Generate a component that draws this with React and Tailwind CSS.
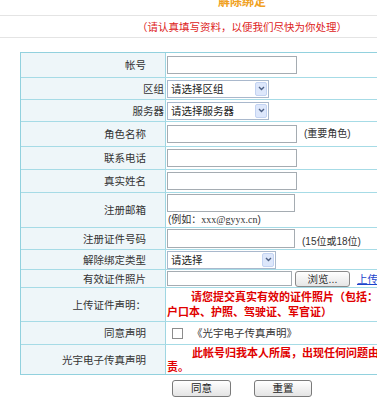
import React from "react";

const Label = ({ children, tight }) => (
  <div
    className={`w-[145px] shrink-0 bg-[#eef6f9] border-r border-[#9fd6e2] flex items-center justify-end text-[10.5px] leading-[14px] text-[#333] ${
      tight ? "pr-[1px]" : "pr-[19px]"
    }`}
  >
    {children}
  </div>
);

const Row = ({ h, label, tight, children, cellClass = "items-center" }) => (
  <div className={`flex border-b border-[#a6dbe6] last:border-b-0 ${h}`}>
    <Label tight={tight}>{label}</Label>
    <div className={`flex-1 flex pl-[1px] bg-white ${cellClass}`}>{children}</div>
  </div>
);

const Input = ({ w = "w-[130px]", h = "h-[18px]" }) => (
  <div className={`${w} ${h} shrink-0 bg-white border border-[#a5acb2]`} />
);

const Select = ({ text, w }) => (
  <div className={`${w} h-[18px] shrink-0 flex items-center justify-between border border-[#a9b8cc] bg-white pl-[3px] pr-[1px]`}>
    <span className="text-[10.5px] leading-[14px] text-[#222]">{text}</span>
    <span className="w-[12px] h-[14px] flex items-center justify-center bg-[#dde7fb] border border-[#c3d3f2] rounded-[2px]">
      <svg width="7" height="5" viewBox="0 0 7 5">
        <path d="M1 1l2.5 2.5L6 1" fill="none" stroke="#4d6185" strokeWidth="1.4" />
      </svg>
    </span>
  </div>
);

const Btn = ({ children, w }) => (
  <div className={`${w} h-[17px] border border-[#7a7a7a] rounded-[3px] bg-gradient-to-b from-white to-[#e4e4e4] flex items-start justify-center text-[10.5px] leading-[14px] text-[#222]`}>
    {children}
  </div>
);

export default function App() {
  return (
    <div className="w-[377px] h-[413px] overflow-hidden bg-white font-['Liberation_Sans','Noto_Sans_CJK_SC',sans-serif]">
      <div className="w-[484px]">
        {/* title */}
        <div className="-mt-[4px] h-[20px] border-b border-[#e4e4e4] flex justify-center">
          <span className="text-[12px] leading-[12px] font-bold text-[#f0a020]">解除绑定</span>
        </div>
        <div className="h-[22px] border-b border-[#e4e4e4] flex items-center justify-center">
          <span className="text-[10.5px] leading-[12px] text-[#dd2222]">（请认真填写资料，以便我们尽快为你处理）</span>
        </div>

        {/* form table */}
        <div className="mt-[14px] ml-[20px] w-[443px] border border-[#92d1de]">
          <Row h="h-[25px]" label="帐号">
            <Input />
          </Row>
          <Row h="h-[22px]" label="区组" tight>
            <Select text="请选择区组" w="w-[102px]" />
          </Row>
          <Row h="h-[22px]" label="服务器" tight>
            <Select text="请选择服务器" w="w-[102px]" />
          </Row>
          <Row h="h-[25px]" label="角色名称">
            <Input />
            <span className="ml-[7px] text-[10px] leading-[12px] text-[#333]">(重要角色)</span>
          </Row>
          <Row h="h-[23px]" label="联系电话">
            <Input />
          </Row>
          <Row h="h-[23px]" label="真实姓名">
            <Input />
          </Row>
          <Row h="h-[35px]" label="注册邮箱" cellClass="flex-col justify-start pt-[1px]">
            <Input w="w-[128px]" />
            <span className="ml-[1px] mt-[2px] text-[10px] leading-[12px] text-[#333]">
              (例如：<span className="font-['Liberation_Serif',serif]">xxx@gyyx.cn</span>)
            </span>
          </Row>
          <Row h="h-[22px]" label="注册证件号码" cellClass="items-end pb-[1px]">
            <Input w="w-[128px]" h="h-[19px]" />
            <span className="ml-[7px] text-[10px] leading-[12px] text-[#333]">(15位或18位)</span>
          </Row>
          <Row h="h-[20px]" label="解除绑定类型">
            <Select text="请选择" w="w-[109px]" />
          </Row>
          <Row h="h-[18px]" label="有效证件照片">
            <Input w="w-[125px]" h="h-[15px]" />
            <div className="ml-[3px] w-[55px] h-[16px] shrink-0 border border-[#8a8a8a] rounded-[3px] bg-gradient-to-b from-white to-[#e6e6e6] flex items-center justify-center text-[10.5px] leading-[12px] text-[#333]">
              浏览...
            </div>
            <span className="ml-[7px] text-[10.5px] leading-[12px] text-[#1a44cc] underline whitespace-nowrap">上传</span>
          </Row>
          <Row h="h-[34px]" label="上传证件声明：" cellClass="flex-col justify-center">
            <div className="pl-[24px] whitespace-nowrap text-[11px] leading-[15px] font-bold text-[#e00000]">
              请您提交真实有效的证件照片（包括：身份证、
            </div>
            <div className="whitespace-nowrap text-[11px] leading-[15px] font-bold text-[#e00000]">
              户口本、护照、驾驶证、军官证）
            </div>
          </Row>
          <Row h="h-[23px]" label="同意声明">
            <span className="ml-[5px] w-[11px] h-[11px] border border-[#8c8c8c] bg-white shrink-0" />
            <span className="ml-[9px] text-[10.5px] leading-[12px] text-[#333]">《光宇电子传真声明》</span>
          </Row>
          <Row h="h-[29px]" label="光宇电子传真声明" cellClass="flex-col justify-center">
            <div className="pl-[25px] whitespace-nowrap text-[11px] leading-[14px] font-bold text-[#e00000]">
              此帐号归我本人所属，出现任何问题由本人负
            </div>
            <div className="whitespace-nowrap text-[11px] leading-[14px] font-bold text-[#e00000]">责。</div>
          </Row>
        </div>

        {/* buttons */}
        <div className="mt-[5px] flex justify-center gap-[23px]">
          <Btn w="w-[59px]">同意</Btn>
          <Btn w="w-[58px]">重置</Btn>
        </div>
      </div>
    </div>
  );
}
